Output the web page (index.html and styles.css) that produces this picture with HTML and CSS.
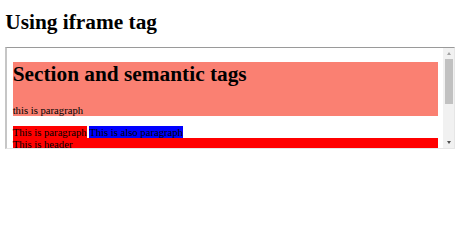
FILE: index.html
```html
<!DOCTYPE html>
<html lang="en">
<head>
<meta charset="utf-8">
<title>Using iframe tag</title>
<link rel="stylesheet" href="styles.css">
</head>
<body>
  <h1 class="page-title">Using iframe tag</h1>
  <div class="frame">
    <div class="frame-doc">
      <section class="semantic">
        <h1 class="doc-title">Section and semantic tags</h1>
        <p class="doc-p">this is paragraph</p>
      </section>
      <div class="line"><span class="tag-red">This is paragraph</span> <span class="tag-blue">This is also paragraph</span></div>
      <header class="doc-header">This is header</header>
    </div>
    <div class="scrollbar">
      <div class="sb-btn"><span class="arrow-up"></span></div>
      <div class="sb-track"><div class="sb-thumb"></div></div>
      <div class="sb-btn"><span class="arrow-down"></span></div>
    </div>
  </div>
</body>
</html>
```
FILE: styles.css
```css
html, body {
  margin: 0;
  padding: 0;
  background: #ffffff;
}
body {
  padding: 0 5.33px;
  font-family: "Liberation Serif", "Times New Roman", serif;
  font-size: 10.67px;
  color: #000;
}
.page-title {
  font-size: 21.33px;
  font-weight: bold;
  margin: 9.5px 0 12.5px;
}
.frame {
  display: flex;
  width: 450px;
  height: 102px;
  box-sizing: border-box;
  border-style: solid;
  border-width: 1px 1px 1px 2px;
  border-color: #9a9a9a #e6e6e6 #e6e6e6 #c6c6c6;
  overflow: hidden;
}
.frame-doc {
  flex: 1;
  min-width: 0;
  overflow: hidden;
  padding: 0 5.33px;
}
.semantic {
  background: salmon;
}
.doc-title {
  font-size: 21.33px;
  font-weight: bold;
  margin: 14.33px 0 16.5px;
}
.doc-p {
  margin: 10.67px 0;
}
.tag-red {
  background: red;
}
.tag-blue {
  background: blue;
}
.doc-header {
  display: block;
  background: red;
}
.scrollbar {
  width: 11.33px;
  flex: none;
  display: flex;
  flex-direction: column;
  background: #f1f1f1;
}
.sb-btn {
  height: 11.33px;
  flex: none;
  display: flex;
  align-items: center;
  justify-content: center;
}
.arrow-up {
  width: 0;
  height: 0;
  border-left: 2.5px solid transparent;
  border-right: 2.5px solid transparent;
  border-bottom: 3px solid #a3a3a3;
}
.arrow-down {
  width: 0;
  height: 0;
  border-left: 2.5px solid transparent;
  border-right: 2.5px solid transparent;
  border-top: 3px solid #505050;
}
.sb-track {
  flex: 1;
  padding: 0 1.5px;
}
.sb-thumb {
  height: 45px;
  background: #c1c1c1;
}
```
